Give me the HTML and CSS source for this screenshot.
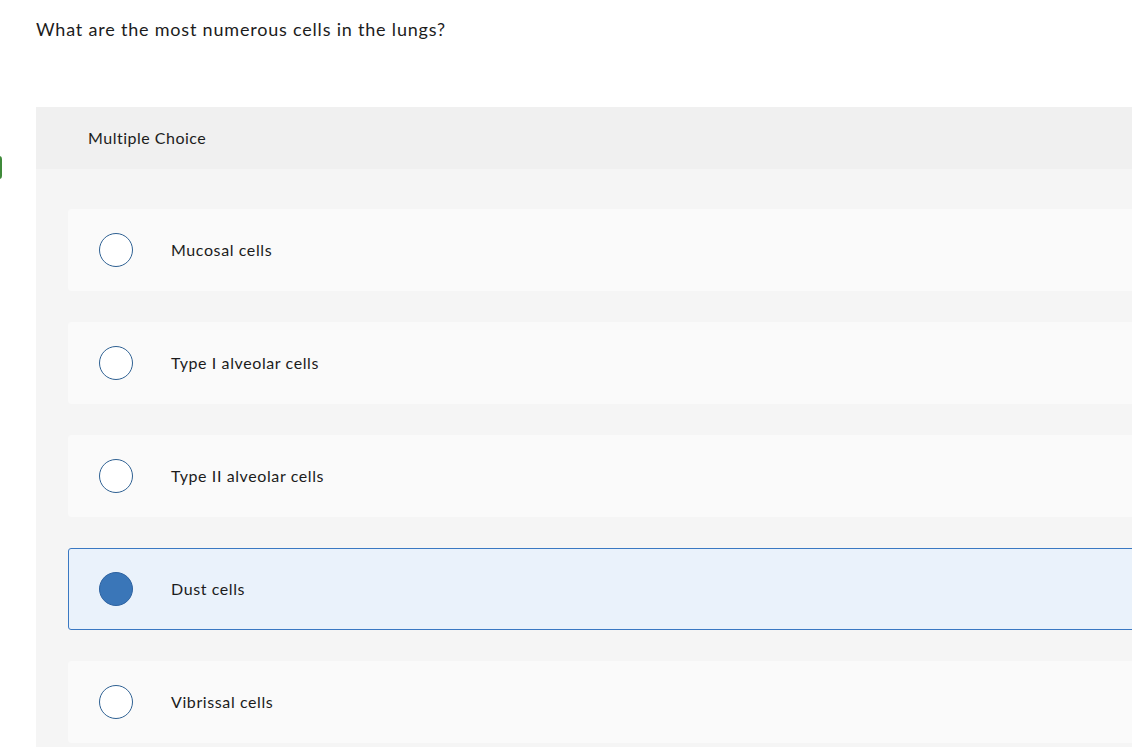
FILE: index.html
```html
<!DOCTYPE html>
<html>
<head>
<meta charset="utf-8">
<link rel="stylesheet" href="styles.css">
</head>
<body>
<div class="page">
  <div class="edge-mark"></div>
  <p class="question">What are the most numerous cells in the lungs?</p>
  <div class="panel">
    <div class="panel-head">Multiple Choice</div>
    <div class="panel-body">
      <div class="option"><span class="radio"></span><span class="label">Mucosal cells</span></div>
      <div class="option"><span class="radio"></span><span class="label">Type I alveolar cells</span></div>
      <div class="option"><span class="radio"></span><span class="label">Type II alveolar cells</span></div>
      <div class="option selected"><span class="radio"></span><span class="label">Dust cells</span></div>
      <div class="option"><span class="radio"></span><span class="label">Vibrissal cells</span></div>
    </div>
  </div>
</div>
</body>
</html>
```
FILE: styles.css
```css
html, body {
  margin: 0;
  padding: 0;
  background: #ffffff;
  height: 100%;
  overflow: hidden;
}
.page {
  position: relative;
  padding: 18px 0 0 36px;
  font-family: Lato, "Open Sans", "Liberation Sans", sans-serif;
  color: #1c1c1c;
  overflow: hidden;
}
.edge-mark {
  position: absolute;
  left: -1px;
  top: 156px;
  width: 3px;
  height: 23px;
  background: #3f8a3a;
  border-radius: 0 3px 3px 0;
}
.question {
  margin: 0;
  font-size: 18px;
  letter-spacing: 0.8px;
  line-height: 22px;
  height: 22px;
  padding-bottom: 1px;
}
.panel {
  margin-top: 66px;
  margin-right: -200px;
  background: #f5f5f5;
}
.panel-head {
  height: 62px;
  background: #f0f0f0;
  display: flex;
  align-items: center;
  padding-left: 52px;
  padding-bottom: 2px;
  box-sizing: border-box;
  font-size: 16px;
  letter-spacing: 0.5px;
}
.panel-body {
  padding: 40px 0 40px 32px;
  display: flex;
  flex-direction: column;
  gap: 31px;
}
.option {
  height: 80px;
  border: 1px solid #fafafa;
  border-radius: 3px;
  background: #fafafa;
  display: flex;
  align-items: center;
  padding-left: 30px;
  gap: 38px;
  font-size: 16px;
  letter-spacing: 0.6px;
}
.radio {
  width: 32px;
  height: 32px;
  border-radius: 50%;
  border: 1.5px solid #2f6193;
  background: #ffffff;
  flex: none;
}
.option.selected {
  background: #eaf2fb;
  border-color: #3a78c2;
}
.option.selected .radio {
  background: #3a76b8;
  border-color: #2e63a1;
}
.label {
  line-height: 20px;
}
```
